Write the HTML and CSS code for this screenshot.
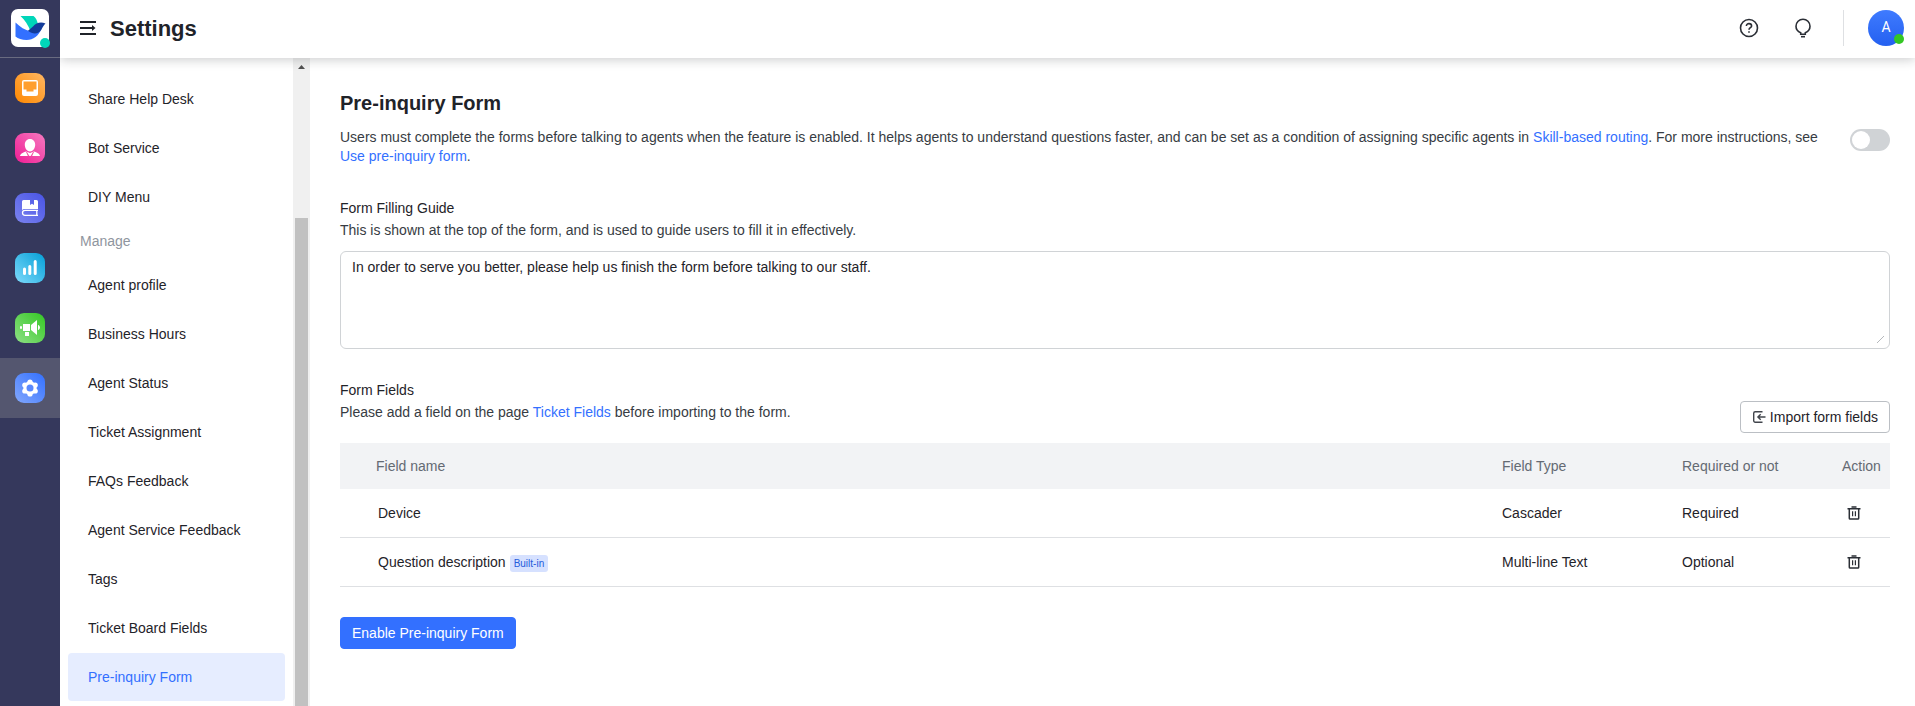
FILE: index.html
```html
<!DOCTYPE html>
<html lang="en">
<head>
    <meta charset="UTF-8">
    <meta name="viewport" content="width=device-width, initial-scale=1.0">
    <title>Settings</title>
    <link rel="stylesheet" href="styles.css">
</head>
<body>
    <nav class="rail">
        <div class="logo">
            <div class="logo-box">
                <svg width="38" height="38" viewBox="0 0 38 38">
                    <path d="M9.500 7h13c2.300 1.500 4 5 4.500 8.500l-7.500 6.500C17 16 14 11 9.500 7z" fill="#00d6b9"/>
                    <path d="M4.500 13.500C9 18 14 21 19.500 22.500c4 1 8 0 11-3-3 7.500-8 11.500-15 11.500-4.500 0-8.500-1.500-11-3.500z" fill="#3370ff"/>
                    <path d="M34.500 14.500c-5-2-9.500-0.500-12.500 3l-5 4.300c5 4 10.500 3.700 13.500-1.300 1.200-2.200 2.300-4.500 4-6z" fill="#133c9a"/>
                </svg>
                <span class="logo-dot"></span>
            </div>
        </div>
        <a class="rail-item">
            <svg class="app orange" viewBox="0 0 30 30">
                <rect x="7" y="7" width="16" height="16" rx="2" fill="#fff"/>
                <path d="M8.500 8.500h13v8h-3v2h-7v-2h-3z" fill="#ff9f2e"/>
            </svg>
        </a>
        <a class="rail-item">
            <svg class="app pink" viewBox="0 0 30 30">
                <path d="M15 6c3.200 0 5.200 2.500 5.200 5.800 0 3.600-2.300 6.700-5.200 6.700s-5.200-3.100-5.200-6.700C9.800 8.500 11.800 6 15 6z" fill="#fff"/>
                <path d="M5 23c.4-2.700 3-3.600 6.200-4.600L15 20l3.800-1.600c3.200 1 5.800 1.900 6.200 4.600z" fill="#fff"/>
                <path d="M11.500 19l2.500 4h-.8zM18.500 19L16 23h.8z" fill="#f5479f" stroke="#f5479f" stroke-width=".6"/>
            </svg>
        </a>
        <a class="rail-item">
            <svg class="app indigo" viewBox="0 0 30 30">
                <path d="M8.500 7H15v5l2-1.200 2 1.200V7h2.500A1.500 1.500 0 0 1 23 8.500V16H9.500c-1 0-1.800.4-2.500 1V8.500A1.500 1.500 0 0 1 8.500 7z" fill="#fff"/>
                <path d="M23 17.300H10a2.500 2.500 0 0 0 0 5h13M21.800 17.300v5" fill="none" stroke="#fff" stroke-width="1.300"/>
            </svg>
        </a>
        <a class="rail-item">
            <svg class="app cyan" viewBox="0 0 30 30">
                <g stroke="#fff" stroke-width="3" stroke-linecap="round">
                    <path d="M9.500 16v4.500M14.800 13.500v7M20.200 8.500v12"/>
                </g>
            </svg>
        </a>
        <a class="rail-item">
            <svg class="app green" viewBox="0 0 30 30">
                <rect x="8" y="11" width="7" height="7" fill="#fff"/>
                <rect x="10" y="19" width="4" height="4" fill="#fff"/>
                <rect x="5" y="13" width="2" height="3" rx="1" fill="#fff"/>
                <path d="M16 12l6-5v15l-6-5z" fill="#fff"/>
                <path d="M23 12c2.600.6 2.600 4.400 0 5z" fill="#fff"/>
            </svg>
        </a>
        <a class="rail-item active">
            <svg class="app blue" viewBox="0 0 30 30">
                <g fill="#fff">
                    <circle cx="15" cy="15" r="6.700"/>
                    <circle cx="15" cy="9" r="2.600"/>
                    <circle cx="20.200" cy="12" r="2.600"/>
                    <circle cx="20.200" cy="18" r="2.600"/>
                    <circle cx="15" cy="21" r="2.600"/>
                    <circle cx="9.800" cy="18" r="2.600"/>
                    <circle cx="9.800" cy="12" r="2.600"/>
                </g>
                <circle cx="15" cy="15" r="3.500" fill="#5a89fe"/>
            </svg>
        </a>
    </nav>

    <div class="page">
        <header class="topbar">
            <svg class="menu-icon" width="16" height="16" viewBox="0 0 16 16">
                <path d="M0 2h16M0 8h13M0 14h16" fill="none" stroke="#1f2329" stroke-width="2"/>
                <path d="M12 5l3.500 3-3.500 3z" fill="#1f2329"/>
            </svg>
            <h1>Settings</h1>
            <div class="topbar-right">
                <svg width="20" height="20" viewBox="0 0 20 20" fill="none" stroke="#2b2f36" stroke-width="1.600">
                    <circle cx="10" cy="10" r="8.500"/>
                    <path d="M7.400 8.100c0-1.600 1.100-2.500 2.600-2.500s2.600.9 2.600 2.300c0 1.800-2.600 1.900-2.600 3.900"/>
                    <path d="M10 13.200v1.600"/>
                </svg>
                <svg class="bulb" width="20" height="20" viewBox="0 0 20 20" fill="none" stroke="#2b2f36" stroke-width="1.600">
                    <path d="M7.700 16.200v-1.500C4.800 13.500 3 11.200 3 8.200a7 7 0 0 1 14 0c0 3-1.800 5.300-4.700 6.500v1.500z"/>
                    <path d="M8 18.700h4"/>
                </svg>
                <span class="divider"></span>
                <div class="avatar">A<span class="online"></span></div>
            </div>
        </header>

        <div class="content">
            <aside class="sidebar">
                <ul class="menu">
                    <li>Share Help Desk</li>
                    <li>Bot Service</li>
                    <li>DIY Menu</li>
                    <li class="group">Manage</li>
                    <li>Agent profile</li>
                    <li>Business Hours</li>
                    <li>Agent Status</li>
                    <li>Ticket Assignment</li>
                    <li>FAQs Feedback</li>
                    <li>Agent Service Feedback</li>
                    <li>Tags</li>
                    <li>Ticket Board Fields</li>
                    <li class="selected">Pre-inquiry Form</li>
                </ul>
                <div class="scrollbar">
                    <svg width="7" height="4" viewBox="0 0 7 4"><path d="M0 4L3.500 0 7 4z" fill="#505050"/></svg>
                    <div class="thumb"></div>
                </div>
            </aside>

            <main class="main">
                <h2>Pre-inquiry Form</h2>
                <div class="intro">
                    <p>Users must complete the forms before talking to agents when the feature is enabled. It helps agents to understand questions faster, and can be set as a condition of assigning specific agents in <a href="#">Skill-based routing</a>. For more instructions, see <a href="#">Use pre-inquiry form</a>.</p>
                    <span class="switch"></span>
                </div>

                <label class="label" for="guide">Form Filling Guide</label>
                <p class="hint">This is shown at the top of the form, and is used to guide users to fill it in effectively.</p>
                <textarea id="guide">In order to serve you better, please help us finish the form before talking to our staff.</textarea>

                <div class="fields-head">
                    <div>
                        <div class="label">Form Fields</div>
                        <p class="hint">Please add a field on the page <a href="#">Ticket Fields</a> before importing to the form.</p>
                    </div>
                    <button class="btn import">
                        <svg width="14" height="14" viewBox="0 0 14 14" fill="none" stroke="#41454c" stroke-width="1.400">
                            <path d="M10.500 1.700H3.200A1.500 1.500 0 0 0 1.700 3.200v7.600a1.500 1.500 0 0 0 1.500 1.500h7.300"/>
                            <path d="M13.500 7H6M8.700 4.200L5.900 7l2.800 2.800"/>
                        </svg>
                        Import form fields
                    </button>
                </div>

                <table class="fields">
                    <thead>
                        <tr>
                            <th class="col-name">Field name</th>
                            <th class="col-type">Field Type</th>
                            <th class="col-required">Required or not</th>
                            <th class="col-action">Action</th>
                        </tr>
                    </thead>
                    <tbody>
                        <tr>
                            <td class="col-name">Device</td>
                            <td>Cascader</td>
                            <td>Required</td>
                            <td class="trash">
                                <svg width="14" height="14" viewBox="0 0 14 14" fill="none" stroke="#2b2f36" stroke-width="1.500">
                                    <path d="M.5 2.700h13M4.500 1h5M2.300 2.700v9.600a.8.8 0 0 0 .8.800h7.800a.8.8 0 0 0 .8-.8V2.700"/>
                                    <path d="M5.600 5.300v5M8.400 5.300v5" stroke-width="1.200"/>
                                </svg>
                            </td>
                        </tr>
                        <tr>
                            <td class="col-name">Question description<span class="tag">Built-in</span></td>
                            <td>Multi-line Text</td>
                            <td>Optional</td>
                            <td class="trash">
                                <svg width="14" height="14" viewBox="0 0 14 14" fill="none" stroke="#2b2f36" stroke-width="1.500">
                                    <path d="M.5 2.700h13M4.500 1h5M2.300 2.700v9.600a.8.8 0 0 0 .8.800h7.800a.8.8 0 0 0 .8-.8V2.700"/>
                                    <path d="M5.600 5.300v5M8.400 5.300v5" stroke-width="1.200"/>
                                </svg>
                            </td>
                        </tr>
                    </tbody>
                </table>

                <button class="btn primary">Enable Pre-inquiry Form</button>
            </main>
        </div>
    </div>
</body>
</html>
```

FILE: styles.css
```css
* {
    box-sizing: border-box;
}
body {
    margin: 0;
    display: flex;
    height: 100vh;
    overflow: hidden;
    font-family: "Liberation Sans", Arial, sans-serif;
    font-size: 14px;
    color: #1f2329;
    background-color: #fff;
}
h1, h2, p, ul {
    margin: 0;
    padding: 0;
}
a {
    color: #3370ff;
    text-decoration: none;
}

/* left app rail */
.rail {
    width: 60px;
    flex: none;
    background-color: #35385c;
}
.logo {
    height: 58px;
    padding: 9px 11px;
    border-bottom: 1px solid #696b80;
}
.logo-box {
    position: relative;
    width: 38px;
    height: 38px;
    border-radius: 7px;
    background-color: #fff;
}
.logo-dot {
    position: absolute;
    right: -1px;
    bottom: -1px;
    width: 10px;
    height: 10px;
    border-radius: 50%;
    background-color: #00d6b9;
}
.rail-item {
    display: flex;
    align-items: center;
    justify-content: center;
    height: 60px;
}
.rail-item.active {
    background-color: #54566f;
}
.app {
    width: 30px;
    height: 30px;
    border-radius: 9px;
}
.orange {
    background: linear-gradient(45deg, #ff8800, #ffb763);
}
.pink {
    background: linear-gradient(45deg, #f01d94, #f57ac0);
}
.indigo {
    background: linear-gradient(225deg, #4954e6, #7b83ee);
}
.cyan {
    background: linear-gradient(225deg, #049fd7, #7edafb);
}
.green {
    background: linear-gradient(225deg, #34c724, #8ee085);
}
.blue {
    background: linear-gradient(225deg, #3370ff, #82a7fc);
}

.page {
    flex: 1;
    display: flex;
    flex-direction: column;
    min-width: 0;
}
.topbar {
    position: relative;
    z-index: 1;
    display: flex;
    align-items: center;
    flex: none;
    height: 58px;
    padding: 0 11px 2px 20px;
    background-color: #fff;
    box-shadow: 0 2px 10px rgba(31, 35, 41, 0.22);
    clip-path: inset(0 0 -20px 0);
}
.topbar h1 {
    margin-left: 14px;
    padding-top: 2px;
    font-size: 22px;
    line-height: 30px;
}
.topbar-right {
    display: flex;
    align-items: center;
    margin-left: auto;
}
.bulb {
    margin-left: 34px;
}
.divider {
    width: 1px;
    height: 36px;
    margin: 0 24px 0 30px;
    background-color: #dee0e3;
}
.avatar {
    position: relative;
    width: 36px;
    height: 36px;
    border-radius: 50%;
    background: linear-gradient(#3f7bff, #2460f0);
    color: #fff;
    font-family: Roboto, sans-serif;
    line-height: 35px;
    text-align: center;
}
.online {
    position: absolute;
    right: 0;
    bottom: 2px;
    width: 10px;
    height: 10px;
    border-radius: 50%;
    background-color: #34c724;
}

.content {
    flex: 1;
    display: flex;
    min-height: 0;
}
.sidebar {
    display: flex;
    flex: none;
    width: 250px;
}
.menu {
    flex: 1;
    padding: 17px 8px 0;
    list-style: none;
}
.menu li {
    height: 48px;
    margin-bottom: 1px;
    padding-left: 20px;
    border-radius: 4px;
    line-height: 48px;
}
.menu .group {
    height: 38px;
    padding-left: 12px;
    line-height: 39px;
    color: #8f959e;
}
.menu .selected {
    background-color: #e6edff;
    color: #3370ff;
}
.scrollbar {
    display: flex;
    flex-direction: column;
    align-items: center;
    width: 17px;
    padding-top: 7px;
    background-color: #f0f0f0;
}
.thumb {
    flex: 1;
    width: 13px;
    margin-top: 149px;
    background-color: #c1c1c1;
}

.main {
    flex: 1;
    min-width: 0;
    padding: 31px 25px 0 30px;
}
.main h2 {
    font-size: 20px;
    line-height: 28px;
}
.intro {
    display: flex;
    justify-content: space-between;
    margin: 11px 0 31px;
    color: #373c43;
    line-height: 19px;
}
.intro p {
    width: 1480px;
}
.switch {
    width: 40px;
    height: 22px;
    margin-top: 1px;
    padding: 2px;
    border-radius: 11px;
    background-color: #d0d3d6;
}
.switch::before {
    content: "";
    display: block;
    width: 18px;
    height: 18px;
    border-radius: 50%;
    background-color: #fff;
}
.label {
    display: block;
    line-height: 22px;
}
.hint {
    color: #373c43;
    line-height: 22px;
}
textarea {
    display: block;
    width: 100%;
    height: 98px;
    margin: 10px 0 30px;
    padding: 4px 11px;
    border: 1px solid #d0d3d6;
    border-radius: 6px;
    color: #1f2329;
    font: inherit;
    line-height: 22px;
    resize: vertical;
}
textarea::-webkit-resizer {
    background: linear-gradient(135deg, transparent 48%, #b5b8bc 48%, #b5b8bc 54%, transparent 54%, transparent 72%, #b5b8bc 72%, #b5b8bc 78%, transparent 78%) 3px 3px / 7px 7px no-repeat;
}
.fields-head {
    display: flex;
    justify-content: space-between;
    height: 54px;
    margin-bottom: 10px;
}
.btn {
    height: 32px;
    padding: 0 11px;
    border: 1px solid #bbbfc4;
    border-radius: 4px;
    background-color: #fff;
    color: #1f2329;
    font: inherit;
}
.btn.import {
    display: flex;
    align-items: center;
    align-self: flex-end;
    gap: 4px;
}
.btn.primary {
    margin-top: 30px;
    border-color: #3370ff;
    background-color: #3370ff;
    color: #fff;
}
.fields {
    width: 100%;
    border-collapse: separate;
    border-spacing: 0;
    table-layout: fixed;
    text-align: left;
}
.fields th {
    height: 46px;
    padding: 0;
    background-color: #f2f3f5;
    color: #646a73;
    font-weight: normal;
}
.fields td {
    height: 49px;
    padding: 0;
    border-bottom: 1px solid #dee0e3;
    line-height: 20px;
}
.fields th.col-name {
    padding-left: 36px;
}
.fields td.col-name {
    padding-left: 38px;
}
.fields .col-type {
    width: 180px;
}
.fields .col-required {
    width: 160px;
}
.fields .col-action {
    width: 48px;
}
.trash svg {
    display: block;
    margin-left: 5px;
}
.tag {
    display: inline-block;
    height: 17px;
    margin-left: 4px;
    padding: 0 4px;
    border-radius: 3px;
    background-color: #d6e1ff;
    color: #245bdb;
    font-size: 10px;
    line-height: 17px;
}
```
